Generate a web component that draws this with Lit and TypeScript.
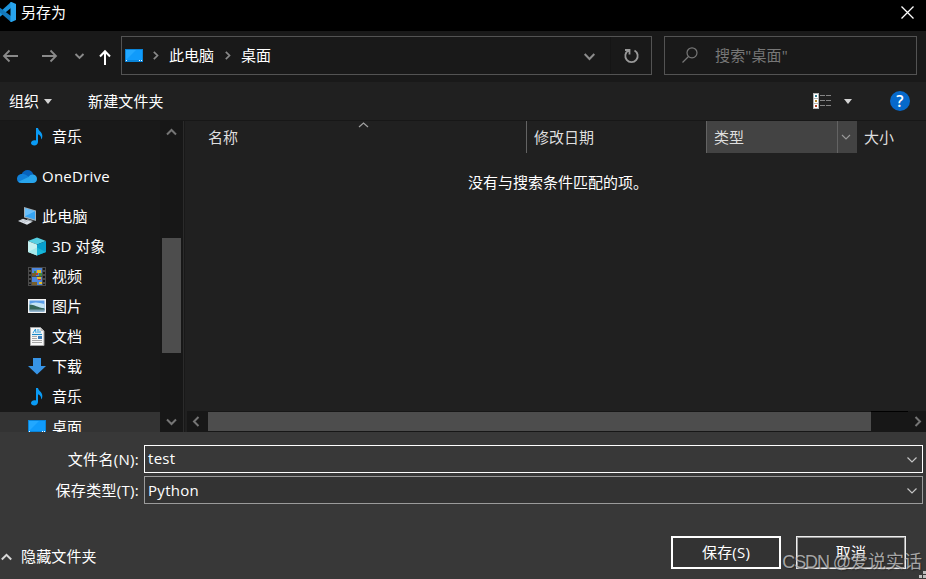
import { LitElement, html, svg, css } from "lit";
import { customElement, property } from "lit/decorators.js";

const music = svg`<path d="M8 1h2c.3 3 5 4.200 4.300 9-.2 1.200-.8 2-1.300 2.500C13.500 9.500 12 8 10 7.300V15c0 2-1.600 3.400-3.700 3.400C4.500 18.400 3 17.500 3 16c0-1.800 2-3 4-2.700.4 0 .7.1 1 .2z" fill="#0a9bf5"/>`;
const monitor = svg`<path d="M0 3h18v13H0z" fill="#0a84d8"/><path d="M1 4h16v10H1z" fill="#109bfb"/><path d="M1 14L11 4H1z" fill="#22a8ff"/><path d="M1 14h1v1H1zM14 14h1v1h-1zM16 14h1v1h-1z" fill="#fff"/>`;

const icons: Record<string, unknown> = {
  music,
  monitor,
  onedrive: svg`<path d="M3.500 7.500C4.500 4.500 7 3 9.500 3c3 0 5 1.800 6 4.500l-5 4z" fill="#0763bd"/><path d="M4 7C1.500 7-1 8.500-1 11.800c0 2 1.200 4 3.200 4l10-5-4-2.700C7 7.300 5.500 7 4 7z" fill="#1180d8"/><path d="M15.500 7.500c-2-.2-4 .5-5 2.500L.5 14.800c.6.700 1.500 1.200 3 1.200H15c2.200 0 4-1.600 4-4 0-2.500-1.500-4.300-3.500-4.500z" fill="#28a5ec"/>`,
  pc: svg`<path d="M6 0l12 3.500V14L6 10.500z" fill="#a4b0b8"/><path d="M7 1.200l10 3v8.300L7 9.500z" fill="#35a4f3"/><path d="M7 1.200l10 3-10 5z" fill="#6bc0fb"/><path d="M9.500 12l6 2-2.500 1.300-5-1.300z" fill="#9aa2a8"/><path d="M0 14l5-2.200 9 3.200-5 2.800z" fill="#dde3ea"/><path d="M2 14l3.500-1.500M4 14.800l4-1.700M6 15.500l4-1.700" stroke="#a6afb8" stroke-width=".6"/>`,
  cube: svg`<path d="M0 4l9-3.500L18 4 9 7.500z" fill="#56cfe3"/><path d="M0 4l9 3.500v11L0 15z" fill="#c5f0f0"/><path d="M0 15l9-4.500v8z" fill="#a4e8ea"/><path d="M9 7.500L18 4v11l-9 3.500z" fill="#089fcd"/><path d="M9 10.500l9 4.500-9 3.500z" fill="#17b6d8"/>`,
  film: svg`<path d="M0 0h18v19H0z" fill="#4b4b4b"/><path d="M1 1h2v2H1zM1 5h2v2H1zM1 9h2v2H1zM1 13h2v2H1zM1 17h2v1H1zM15 1h2v2h-2zM15 5h2v2h-2zM15 9h2v2h-2zM15 13h2v2h-2zM15 17h2v1h-2z" fill="#171717"/><path d="M4 1h10v8H4zM4 10h10v8H4z" fill="#4d86db"/><path d="M4 6h4v3H4zM4 15h5v3H4z" fill="#79602b"/><path d="M9 3h4v3H9zM9 10h4v2H9zM11 15h3v2h-3z" fill="#e4bc28"/><path d="M8 6h2v2H8zM10 12h3v1h-3z" fill="#c33c28"/><path d="M11 6h3v3h-3zM6 4h2v2H6z" fill="#3d8a42"/>`,
  image: svg`<path d="M0 2h18v14H0z" fill="#f4f4f4"/><path d="M1.500 3.500h15v11h-15z" fill="#5a9ee8"/><path d="M1.500 7q5-3 15 0v4h-15z" fill="#c2e4f6"/><path d="M1.500 7.500c5 0 8 3 15 4v1.500h-15z" fill="#35675a"/><path d="M1.500 12.500h15v2h-15z" fill="#7fa2b4"/>`,
  doc: svg`<path d="M2.500.5h10l3.500 3.500v14.500H2.500z" fill="#f8f8f8" stroke="#a4a4a4"/><path d="M12.500.5L16 4h-3.500z" fill="#bdbdbd"/><path d="M5 6l2.500-4L8 6M9 3h2.500M9 5h4" stroke="#2196d8" fill="none"/><path d="M4 7.500h10" stroke="#1788c8" stroke-width="1.200"/><path d="M4 9.500h5M4 11.500h5M4 13.500h10M4 15.500h10" stroke="#a6a6a6"/><path d="M10 9h4v3h-4z" fill="#397ebd"/>`,
  down: svg`<path d="M5 1h8v8h5l-9 8.500L0 9h5z" fill="#3794e6"/>`,
};

const icon = (name: string) =>
  html`<svg class="ico" width="18" height="19" viewBox="0 0 18 19">${icons[name]}</svg>`;

const chevron = (d: string, w: number, h: number, cls: string, sw = 2) =>
  html`<svg class=${cls} width=${w} height=${h} viewBox="0 0 ${w} ${h}"><path d=${d} fill="none" stroke="currentColor" stroke-width=${sw} /></svg>`;

const base = css`
  * { box-sizing: border-box; }
  svg { display: block; flex: none; overflow: visible; }
  .t { display: block; white-space: nowrap; line-height: 20px; }
`;

@customElement("nav-pane")
export class NavPane extends LitElement {
  static styles = [base, css`
    :host { display: flex; width: 185px; height: 311px; background: #191919; overflow: hidden; border-right: 1px solid #191919; }
    .list { width: 160px; }
    .row { display: flex; align-items: center; height: 30px; padding-left: 28px; gap: 6px; }
    .row.top { padding-left: 18px; letter-spacing: .25px; }
    .row.gap { margin-top: 10px; }
    .row.sel { background: #333; margin-top: 1px; height: 29px; }
    .bar { width: 23px; background: #171717; display: flex; flex-direction: column; align-items: center; color: #757575; padding: 7px 0 6px; }
    .thumb { width: 19px; height: 115px; background: #4d4d4d; margin-top: 102px; margin-bottom: auto; }
    .edge { width: 1px; background: #2b2b2b; }
  `];
  rows = [
    ["music", "音乐", ""], ["onedrive", "OneDrive", "top gap"], ["pc", "此电脑", "top gap"],
    ["cube", "3D 对象", ""], ["film", "视频", ""], ["image", "图片", ""], ["doc", "文档", ""],
    ["down", "下载", ""], ["music", "音乐", ""], ["monitor", "桌面", "sel"],
  ];
  render() {
    return html`
      <div class="list">
        ${this.rows.map(([i, label, c]) => html`<div class="row ${c}">${icon(i)}<span class="t">${label}</span></div>`)}
      </div>
      <div class="bar">
        ${chevron("M1 6.500L5.500 2L10 6.500", 11, 8, "")}
        <div class="thumb"></div>
        ${chevron("M1 1.500L5.500 6L10 1.500", 11, 8, "")}
      </div>
      <div class="edge"></div>`;
  }
}

@customElement("file-pane")
export class FilePane extends LitElement {
  static styles = [base, css`
    :host { display: flex; flex-direction: column; flex: 1; background: #202020; height: 311px; min-width: 0; }
    .head { display: flex; height: 32px; color: #dedede; }
    .col { height: 32px; padding-top: 6px; border-left: 1px solid #636363; padding-left: 7px; }
    .name { width: 341px; border: 0; padding-left: 23px; display: flex; }
    .sort { margin: -5px 0 0 120px; color: #a0a0a0; }
    .date { width: 180px; }
    .type { width: 131px; background: #434343; }
    .drop { width: 20px; background: #434343; padding: 14px 0 0 3px; color: #999; }
    .size { border: 0; }
    .empty { margin: 19px 0 0 283px; color: #fff; }
    .hbar { display: flex; align-items: center; margin-top: auto; height: 21px; background: #171717; margin-left: 2px; color: #757575; }
    .left { margin-left: 5px; }
    .thumb { width: 663px; height: 19px; background: #4d4d4d; margin-left: 8px; }
    .track { width: 37px; height: 21px; border-top: 1px solid #000; }
    .right { margin-left: 6px; }
  `];
  render() {
    return html`
      <div class="head">
        <div class="col name"><span class="t">名称</span>${chevron("M1 5L5.500 1L10 5", 11, 6, "sort", 1.2)}</div>
        <div class="col date"><span class="t">修改日期</span></div>
        <div class="col type"><span class="t">类型</span></div>
        <div class="col drop">${chevron("M1 0L5 4L9 0", 10, 5, "", 1.1)}</div>
        <div class="col size"><span class="t">大小</span></div>
      </div>
      <span class="t empty">没有与搜索条件匹配的项。</span>
      <div class="hbar">
        ${chevron("M6.500 1L2 5.500L6.500 10", 8, 11, "left")}
        <div class="thumb"></div>
        <div class="track"></div>
        ${chevron("M1.500 1L6 5.500L1.500 10", 8, 11, "right")}
      </div>`;
  }
}

@customElement("field-row")
export class FieldRow extends LitElement {
  @property() label = "";
  @property() value = "";
  @property({ type: Boolean }) active = false;
  static styles = [base, css`
    :host { display: flex; height: 28px; padding-right: 3px; letter-spacing: .3px; }
    .label { width: 144px; padding: 4px 5px 0 0; text-align: right; }
    .box { flex: 1; display: flex; justify-content: space-between; border: 1px solid #9b9b9b; background: #333; padding: 3px 5px 0 3px; }
    .box.active { border-color: #fff; background: #383838; padding-top: 2px; }
    .arrow { color: #c4c4c4; margin-top: 8px; }
    .active .arrow { margin-top: 9px; }
  `];
  render() {
    return html`<span class="t label">${this.label}</span>
      <div class="box ${this.active ? "active" : ""}"><span class="t">${this.value}</span>${chevron("M.5 .5L5 5L9.500 .5", 10, 6, "arrow", 1.2)}</div>`;
  }
}

@customElement("app-root")
export class AppRoot extends LitElement {
  static styles = [base, css`
    :host { display: block; position: relative; width: 926px; height: 579px; overflow: hidden; background: #383838; color: #fff; font: 15px "Open Sans", "Noto Sans CJK SC", sans-serif; }
    .title { display: flex; height: 31px; background: #000; padding-top: 2px; }
    .title .t { margin: 0 auto 0 5px; }
    .close { margin: 4px 12px 0 0; }
    .nav { display: flex; height: 51px; background: #191919; padding: 5px 9px 0 3px; color: #8a8a8a; }
    .arrow { margin-top: 14px; }
    .fwd { margin-left: 24px; }
    .recent { margin: 17px 0 0 17px; }
    .up { margin: 14px 0 0 15px; color: #fff; }
    .addr { display: flex; width: 531px; height: 39px; margin-left: 10px; border: 1px solid #535353; padding: 8px 0 0 3px; color: #fff; }
    .addr .ico { margin-top: 1px; }
    .sep { margin: 6px 0 0 10px; color: #898989; }
    .crumb { margin-left: 10px; }
    .crumb + .sep { margin-left: 11px; }
    .open { margin: 8px 15px 0 auto; color: #8c8c8c; }
    .refresh { border-left: 1px solid #151515; margin: -8px 0 0; padding: 11px 12px 0 13px; color: #999; height: 37px; }
    .search { display: flex; width: 253px; height: 39px; border: 1px solid #535353; margin-left: 12px; padding: 8px 0 0 17px; color: #777; letter-spacing: .15px; }
    .search .t { margin-left: 17px; }
    .search svg { margin-top: 2px; }
    .tools { display: flex; height: 39px; background: #202020; border-bottom: 1px solid #171717; padding: 9px 16px 0 9px; }
    .caret { border: 4.500px solid transparent; border-top: 5px solid #d4d4d4; border-bottom: 0; width: 0; height: 0; margin: 8px 0 0 5px; }
    .new { margin-left: 36px; margin-right: auto; letter-spacing: .15px; }
    .view { margin-top: 2px; }
    .view + .caret { margin: 8px 38px 0 13px; }
    .help { width: 20px; height: 20px; border-radius: 50%; background: #0669cb; text-align: center; font-weight: 600; line-height: 20px; font-size: 16px; }
    .main { display: flex; height: 311px; }
    .fields { display: flex; flex-direction: column; gap: 3px; padding-top: 13px; }
    .foot { display: flex; padding: 32px 20px 0 1px; }
    .hide { margin: 17px 0 0; color: #d8d8d8; }
    .foot .lbl { margin: 10px auto 0 9px; letter-spacing: .15px; }
    .btn { width: 110px; height: 33px; border: 2px solid #fff; background: #333; text-align: center; padding-top: 4px; letter-spacing: .2px; }
    .cancel { border-width: 1px; border-color: #efefef; box-shadow: inset 0 0 0 1px #9b9b9b; margin-left: 15px; padding-top: 5px; }
    .mark { position: absolute; right: 4px; top: 550px; font: 18px/24px "Liberation Sans", "Noto Sans CJK SC", sans-serif; color: rgba(205,205,205,.76); text-shadow: 1px 1px 1px rgba(30,30,30,.6); white-space: nowrap; }
    .latin { letter-spacing: -1.100px; }
    .grip { position: absolute; right: 0; bottom: 1px; }
  `];
  render() {
    return html`
      <header class="title">
        <svg width="16" height="20" viewBox="0 0 16 20"><path d="M11 0v6L-1 15.500-4 13.500z" fill="#1c94dc"/><path d="M11 20v-6L-1 5l-3 2z" fill="#1379bd"/><path d="M10.500 0h1l4.500 2v16l-4.500 2h-1z" fill="#28a3ec"/></svg>
        <span class="t">另存为</span>
        <svg class="close" width="13" height="13" viewBox="0 0 13 13"><path d="M.5 .5l12 12M12.500 .5l-12 12" stroke="#fff" stroke-width="1.300"/></svg>
      </header>
      <nav class="nav">
        ${chevron("M15 6H1M6.500 .5L1 6l5.500 5.500", 15, 12, "arrow", 1.8)}
        ${chevron("M0 6h14M8.500 .5L14 6l-5.500 5.500", 16, 12, "arrow fwd", 1.8)}
        ${chevron("M.5 1L4.500 5l4-4", 9, 6, "recent", 1.9)}
        ${chevron("M6 15V1M1 6.500L6 1.200l5 5.300", 12, 15, "up", 2)}
        <div class="addr">
          ${icon("monitor")}
          ${chevron("M.8 .8L4.500 4.500L.8 8.200", 6, 9, "sep", 1.7)}
          <span class="t crumb">此电脑</span>
          ${chevron("M.8 .8L4.500 4.500L.8 8.200", 6, 9, "sep", 1.7)}
          <span class="t crumb">桌面</span>
          ${chevron("M.7 1L5.500 6l4.800-5", 11, 7, "open", 2)}
          <div class="refresh"><svg width="15" height="16" viewBox="0 0 15 16"><path d="M10.500 2.500A6.200 6.200 0 1 1 4.500 2.500M1 2h4.500v4.500" fill="none" stroke="currentColor" stroke-width="1.800"/></svg></div>
        </div>
        <div class="search">
          <svg width="16" height="16" viewBox="0 0 16 16"><circle cx="10" cy="5.800" r="5" fill="none" stroke="currentColor" stroke-width="1.200"/><path d="M6.500 9.500L.5 15.500" stroke="currentColor" stroke-width="1.300"/></svg>
          <span class="t">搜索"桌面"</span>
        </div>
      </nav>
      <div class="tools">
        <span class="t">组织</span><i class="caret"></i><span class="t new">新建文件夹</span>
        <svg class="view" width="18" height="16" viewBox="0 0 18 16"><path d="M0 0h6v16H0z" fill="#b5b5b5"/><path d="M1 1h4v4H1zM1 6h4v4H1zM1 11h4v4H1z" fill="#fff"/><path d="M2 2h2v2H2z" fill="#327c90"/><path d="M2 7h2v2H2z" fill="#b38226"/><path d="M2 12h2v2H2z" fill="#b33c1d"/><path d="M7 2.500h5M13 2.500h5M7 7.500h5M13 7.500h5M7 12.500h5M13 12.500h5" stroke="#858585"/></svg>
        <i class="caret"></i><span class="help">?</span>
      </div>
      <main class="main"><nav-pane></nav-pane><file-pane></file-pane></main>
      <section class="fields">
        <field-row label="文件名(N):" value="test" active></field-row>
        <field-row label="保存类型(T):" value="Python"></field-row>
      </section>
      <footer class="foot">
        ${chevron("M.8 6.500L5.500 1.800l4.700 4.700", 11, 8, "hide", 2)}
        <span class="t lbl">隐藏文件夹</span>
        <div class="btn"><span class="t">保存(S)</span></div>
        <div class="btn cancel"><span class="t">取消</span></div>
      </footer>
      <div class="mark"><span class="latin">CSDN @</span>爱说实话</div>
      <svg class="grip" width="7" height="7" viewBox="0 0 7 7"><path d="M4 0h3v3H4zM0 4h3v3H0zM4 4h3v3H4z" fill="#bdbdbd"/></svg>`;
  }
}
